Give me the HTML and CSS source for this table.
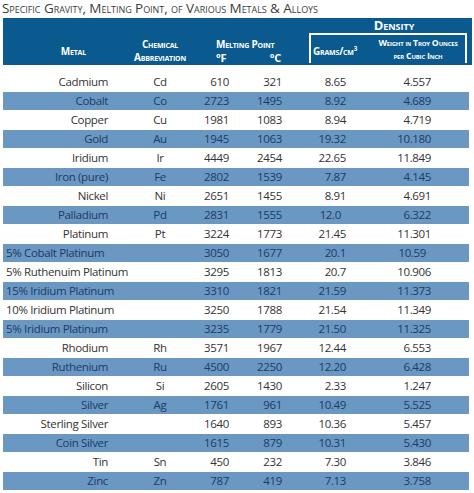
FILE: index.html
```html
<!DOCTYPE html>
<html>
<head>
<meta charset="utf-8">
<link rel="stylesheet" href="styles.css">
</head>
<body>
<div class="page">
  <h1 class="title">Specific Gravity, Melting Point, of Various Metals &amp; Alloys</h1>
  <div class="head">
    <div class="dens-title">Density</div>
    <div class="h-metal">Metal</div>
    <div class="h-chem">Chemical<br>Abbreviation</div>
    <div class="h-melt">
      <div>Melting Point</div>
      <div class="deg"><span>°F</span><span>°C</span></div>
    </div>
    <div class="bracket">
      <div class="h-grams">Grams/cm³</div>
      <div class="h-troy">Weight <span class="tiny">in</span> Troy Ounces<br>per Cubic Inch</div>
    </div>
  </div>
  <table class="data">
    <colgroup>
      <col class="c1"><col class="c2"><col class="c3"><col class="c4"><col class="c5"><col class="c6">
    </colgroup>
    <tbody>
      <tr><td class="m">Cadmium</td><td class="ch">Cd</td><td class="f">610</td><td class="c">321</td><td class="g">8.65</td><td class="t">4.557</td></tr>
      <tr class="band"><td class="m">Cobalt</td><td class="ch">Co</td><td class="f">2723</td><td class="c">1495</td><td class="g">8.92</td><td class="t">4.689</td></tr>
      <tr><td class="m">Copper</td><td class="ch">Cu</td><td class="f">1981</td><td class="c">1083</td><td class="g">8.94</td><td class="t">4.719</td></tr>
      <tr class="band"><td class="m">Gold</td><td class="ch">Au</td><td class="f">1945</td><td class="c">1063</td><td class="g">19.32</td><td class="t">10.180</td></tr>
      <tr><td class="m">Iridium</td><td class="ch">Ir</td><td class="f">4449</td><td class="c">2454</td><td class="g">22.65</td><td class="t">11.849</td></tr>
      <tr class="band"><td class="m">Iron (pure)</td><td class="ch">Fe</td><td class="f">2802</td><td class="c">1539</td><td class="g">7.87</td><td class="t">4.145</td></tr>
      <tr><td class="m">Nickel</td><td class="ch">Ni</td><td class="f">2651</td><td class="c">1455</td><td class="g">8.91</td><td class="t">4.691</td></tr>
      <tr class="band"><td class="m">Palladium</td><td class="ch">Pd</td><td class="f">2831</td><td class="c">1555</td><td class="g g-short">12.0</td><td class="t">6.322</td></tr>
      <tr><td class="m">Platinum</td><td class="ch">Pt</td><td class="f">3224</td><td class="c">1773</td><td class="g">21.45</td><td class="t">11.301</td></tr>
      <tr class="band"><td class="alloy" colspan="2">5% Cobalt Platinum</td><td class="f">3050</td><td class="c">1677</td><td class="g">20.1</td><td class="t t-short">10.59</td></tr>
      <tr><td class="alloy" colspan="2">5% Ruthenuim Platinum</td><td class="f">3295</td><td class="c">1813</td><td class="g">20.7</td><td class="t">10.906</td></tr>
      <tr class="band"><td class="alloy" colspan="2">15% Iridium Platinum</td><td class="f">3310</td><td class="c">1821</td><td class="g">21.59</td><td class="t">11.373</td></tr>
      <tr><td class="alloy" colspan="2">10% Iridium Platinum</td><td class="f">3250</td><td class="c">1788</td><td class="g">21.54</td><td class="t">11.349</td></tr>
      <tr class="band"><td class="alloy" colspan="2">5% Iridium Platinum</td><td class="f">3235</td><td class="c">1779</td><td class="g">21.50</td><td class="t">11.325</td></tr>
      <tr><td class="m">Rhodium</td><td class="ch">Rh</td><td class="f">3571</td><td class="c">1967</td><td class="g">12.44</td><td class="t">6.553</td></tr>
      <tr class="band"><td class="m">Ruthenium</td><td class="ch">Ru</td><td class="f">4500</td><td class="c">2250</td><td class="g">12.20</td><td class="t">6.428</td></tr>
      <tr><td class="m">Silicon</td><td class="ch">Si</td><td class="f">2605</td><td class="c">1430</td><td class="g">2.33</td><td class="t">1.247</td></tr>
      <tr class="band"><td class="m">Silver</td><td class="ch">Ag</td><td class="f">1761</td><td class="c">961</td><td class="g">10.49</td><td class="t">5.525</td></tr>
      <tr><td class="m">Sterling Silver</td><td class="ch"></td><td class="f">1640</td><td class="c">893</td><td class="g">10.36</td><td class="t">5.457</td></tr>
      <tr class="band"><td class="m">Coin Silver</td><td class="ch"></td><td class="f">1615</td><td class="c">879</td><td class="g">10.31</td><td class="t">5.430</td></tr>
      <tr><td class="m">Tin</td><td class="ch">Sn</td><td class="f">450</td><td class="c">232</td><td class="g">7.30</td><td class="t">3.846</td></tr>
      <tr class="band"><td class="m">Zinc</td><td class="ch">Zn</td><td class="f">787</td><td class="c">419</td><td class="g">7.13</td><td class="t">3.758</td></tr>
    </tbody>
  </table>
</div>
</body>
</html>
```
FILE: styles.css
```css
html, body {
  margin: 0;
  padding: 0;
  background: #fff;
}
.page {
  padding-left: 3px;
  font-family: "Open Sans", "Noto Sans", sans-serif;
  color: #333;
}
.title {
  margin: 0 0 0 -1px;
  height: 17px;
  font-size: 13.5px;
  line-height: 17px;
  font-weight: normal;
  font-variant: small-caps;
  color: #3c3c3c;
  white-space: nowrap;
  letter-spacing: -0.05px;
}
.head {
  margin-top: 1px;
  width: 469px;
  height: 47px;
  background: #0a5a8f;
  color: #fff;
  display: grid;
  grid-template-columns: 122px 70px 45px 55px 70px 107px;
  grid-template-rows: 15px 32px;
  font-weight: bold;
  font-variant: small-caps;
  font-size: 10px;
  line-height: 13px;
  letter-spacing: -0.2px;
}
.dens-title {
  grid-column: 5 / 7;
  grid-row: 1;
  font-size: 13px;
  line-height: 15px;
  padding-left: 26px;
  padding-right: 5px;
  text-align: center;
  align-self: end;
  padding-top: 2px;
  letter-spacing: 0;
}
.h-metal, .h-chem, .h-melt {
  grid-row: 2;
  align-self: center;
  padding-top: 4px;
}
.h-metal {
  grid-column: 1;
  text-align: right;
  padding-right: 39px;
}
.h-chem {
  grid-column: 2;
  text-align: center;
}
.h-melt {
  grid-column: 3 / 5;
  padding-left: 21px;
  padding-right: 14px;
  white-space: nowrap;
}
.deg {
  display: flex;
  justify-content: space-between;
  font-size: 11px;
}
.bracket {
  grid-column: 5 / 7;
  grid-row: 2;
  margin-left: 14px;
  margin-right: 5px;
  margin-bottom: 2px;
  border: 2px solid #fff;
  border-bottom: 0;
  display: grid;
  grid-template-columns: 60px 1fr;
  align-items: center;
  padding-top: 2px;
}
.h-grams {
  padding-left: 2px;
  padding-top: 2px;
  font-size: 10px;
  white-space: nowrap;
}
.h-troy {
  text-align: center;
  font-size: 8.8px;
  white-space: nowrap;
}
.tiny {
  font-size: 7px;
}
.data {
  margin-top: 7px;
  border-collapse: separate;
  border-spacing: 0;
  width: 466px;
  table-layout: fixed;
  font-size: 11.5px;
  letter-spacing: -0.35px;
}
.c1 { width: 122px; }
.c2 { width: 70px; }
.c3 { width: 45px; }
.c4 { width: 55px; }
.c5 { width: 70px; }
.c6 { width: 104px; }
.data td {
  height: 18px;
  padding: 0;
  border-top: 1px solid transparent;
  background-clip: padding-box;
  line-height: 18px;
  white-space: nowrap;
  overflow: visible;
}
.band td {
  background-color: #6b97c3;
  color: #1b3c63;
}
td.m { text-align: right; padding-right: 17px; }
td.alloy { text-align: left; padding-left: 3px; }
td.ch { text-align: center; }
td.f { text-align: right; padding-right: 11px; }
td.c { text-align: right; padding-right: 13px; }
td.g { text-align: right; padding-right: 19px; }
td.g-short { padding-right: 24px; }
td.t { text-align: right; padding-right: 38px; }
td.t-short { padding-right: 43px; }
```
